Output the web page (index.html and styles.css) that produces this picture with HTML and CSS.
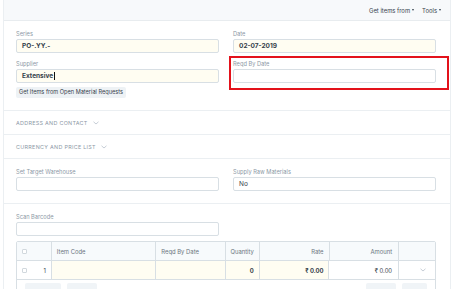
FILE: index.html
```html
<!DOCTYPE html>
<html>
<head>
<meta charset="utf-8">
<link rel="stylesheet" href="styles.css">
</head>
<body>
<div class="page">
  <div class="toolbar">
    <span class="tbtn">Get items from <i class="caret"></i></span>
    <span class="tbtn">Tools <i class="caret"></i></span>
  </div>

  <div class="section s1">
    <div class="grid2">
      <div class="col">
        <div class="field">
          <div class="label">Series</div>
          <div class="input yellow bold">PO-.YY.-</div>
        </div>
        <div class="field">
          <div class="label">Supplier</div>
          <div class="input yellow bold">Extensive<span class="cursor"></span></div>
        </div>
        <div class="btn">Get Items from Open Material Requests</div>
      </div>
      <div class="col">
        <div class="field">
          <div class="label">Date</div>
          <div class="input yellow bold">02-07-2019</div>
        </div>
        <div class="field hl">
          <div class="label">Reqd By Date</div>
          <div class="input"></div>
          <div class="highlight"></div>
        </div>
      </div>
    </div>
  </div>

  <div class="section collapsed">ADDRESS AND CONTACT <svg class="chev" width="6" height="4" viewBox="0 0 6 4"><polyline points="0.5,0.8 3,3 5.5,0.8" fill="none" stroke="#b8c2cc" stroke-width="0.8"/></svg></div>
  <div class="section collapsed">CURRENCY AND PRICE LIST <svg class="chev" width="6" height="4" viewBox="0 0 6 4"><polyline points="0.5,0.8 3,3 5.5,0.8" fill="none" stroke="#b8c2cc" stroke-width="0.8"/></svg></div>

  <div class="section s3">
    <div class="grid2">
      <div class="field">
        <div class="label">Set Target Warehouse</div>
        <div class="input"></div>
      </div>
      <div class="field">
        <div class="label">Supply Raw Materials</div>
        <div class="input">No</div>
      </div>
    </div>
  </div>

  <div class="section s4">
    <div class="grid2">
      <div class="field">
        <div class="label">Scan Barcode</div>
        <div class="input"></div>
      </div>
    </div>
    <div class="table">
      <div class="trow head">
        <div class="cell c0"><span class="cb"></span></div>
        <div class="cell c1">Item Code</div>
        <div class="cell c2">Reqd By Date</div>
        <div class="cell c3 r">Quantity</div>
        <div class="cell c4 r">Rate</div>
        <div class="cell c5 r">Amount</div>
        <div class="cell c6"></div>
      </div>
      <div class="trow body">
        <div class="cell c0"><span class="cb"></span><span class="idx">1</span></div>
        <div class="cell c1 yellow"></div>
        <div class="cell c2 yellow"></div>
        <div class="cell c3 r yellow bold">0</div>
        <div class="cell c4 r yellow bold">₹ 0.00</div>
        <div class="cell c5 r">₹ 0.00</div>
        <div class="cell c6 ctr"><svg width="6" height="4" viewBox="0 0 6 4"><polyline points="0.5,0.8 3,3 5.5,0.8" fill="none" stroke="#b8c2cc" stroke-width="0.8"/></svg></div>
      </div>
      <div class="tfoot">
        <div class="fleft"><span class="fbtn w1"></span><span class="fbtn w2"></span></div>
        <div class="fright"><span class="fbtn w3"></span><span class="fbtn w4"></span></div>
      </div>
    </div>
  </div>
</div>
</body>
</html>
```

FILE: styles.css
```css
* { box-sizing: border-box; }
html, body { margin: 0; padding: 0; background: #fff; }
body {
  font-family: "Inter", "Noto Sans", sans-serif;
  color: #36414c;
  overflow: hidden;
  height: 289px;
}
.page {
  margin-left: 3px;
  width: 448px;
  border-left: 1px solid #ebeff2;
  border-right: 1px solid #ebeff2;
  background: #fff;
  min-height: 289px;
}
.toolbar {
  height: 21px;
  background: #f7f9fb;
  border-bottom: 1px solid #e8ecef;
  display: flex;
  justify-content: flex-end;
  align-items: center;
  gap: 8px;
  padding-right: 9px;
}
.tbtn {
  font-size: 5.9px;
  color: #36414c;
  display: flex;
  align-items: center;
  gap: 2px;
}
.caret {
  display: inline-block;
  width: 0; height: 0;
  border-left: 1.6px solid transparent;
  border-right: 1.6px solid transparent;
  border-top: 2px solid #36414c;
}
.section {
  border-bottom: 1px solid #ebeff2;
  padding: 0 14px 0 12px;
}
.grid2 {
  display: grid;
  grid-template-columns: 203px 203px;
  column-gap: 14px;
}
.s1 { padding-top: 8px; padding-bottom: 12px; }
.field { margin-bottom: 6px; position: relative; }
.label {
  font-size: 5.7px;
  line-height: 9px;
  height: 9px;
  color: #8d99a6;
  margin-bottom: 1px;
}
.input {
  height: 14px;
  border: 1px solid #d8dfe4;
  border-radius: 2px;
  background: #fff;
  padding: 0 5px;
  font-size: 6.5px;
  line-height: 12px;
  color: #36414c;
  display: flex;
  align-items: center;
}
.yellow { background: #fffdf2; }
.bold { font-weight: 700; }
.cursor {
  display: inline-block;
  width: 0.8px;
  height: 8px;
  background: #111;
  margin-left: 0.5px;
}
.btn {
  display: block;
  width: fit-content;
  margin-top: -2px;
  height: 11px;
  line-height: 11px;
  padding: 0 3px;
  font-size: 5.6px;
  background: #eef2f5;
  border-radius: 2px;
  color: #36414c;
}
.highlight {
  position: absolute;
  left: -4px;
  right: -13px;
  top: -3px;
  bottom: -7px;
  border: 2px solid #e3121b;
}
.collapsed {
  height: 24px;
  display: flex;
  align-items: center;
  gap: 3px;
  font-size: 5.4px;
  letter-spacing: 0.3px;
  color: #8d99a6;
}
.chev { margin-left: 2px; }
.s3 { padding-top: 8px; padding-bottom: 6px; }
.s4 { padding-top: 8px; border-bottom: none; }
.s4 .field { margin-bottom: 5px; }
.table {
  border: 1px solid #d8dfe4;
  border-radius: 2px;
  width: 420px;
}
.trow {
  display: flex;
  height: 19px;
  border-bottom: 1px solid #d8dfe4;
}
.head { background: #f7fafc; }
.cell {
  height: 100%;
  border-right: 1px solid #d8dfe4;
  padding: 0 5px;
  display: flex;
  align-items: center;
  font-size: 5.9px;
  color: #6c7680;
}
.body .cell { color: #36414c; }
.cell.r { justify-content: flex-end; }
.cell.ctr { justify-content: center; padding-left: 16px; }
.c0 { width: 35px; padding-left: 5px; justify-content: space-between; }
.c1 { width: 105px; }
.c2 { width: 70px; }
.c3 { width: 34px; }
.c4 { width: 70px; }
.c5 { width: 70px; padding-right: 6px; }
.c6 { width: 36px; border-right: none; }
.cb {
  width: 5px;
  height: 5px;
  border: 1px solid #d1d8dd;
  border-radius: 1px;
  background: #fff;
}
.head .c0 { justify-content: flex-start; }
.idx { font-size: 5.9px; color: #36414c; }
.tfoot {
  height: 20px;
  display: flex;
  justify-content: space-between;
  padding: 3px 8px 0 8px;
}
.fleft, .fright { display: flex; gap: 6px; }
.fbtn {
  height: 12px;
  background: #f0f4f7;
  border-radius: 2px;
}
.w1 { width: 36px; }
.w2 { width: 30px; }
.w3 { width: 30px; }
.w4 { width: 25px; }
```
